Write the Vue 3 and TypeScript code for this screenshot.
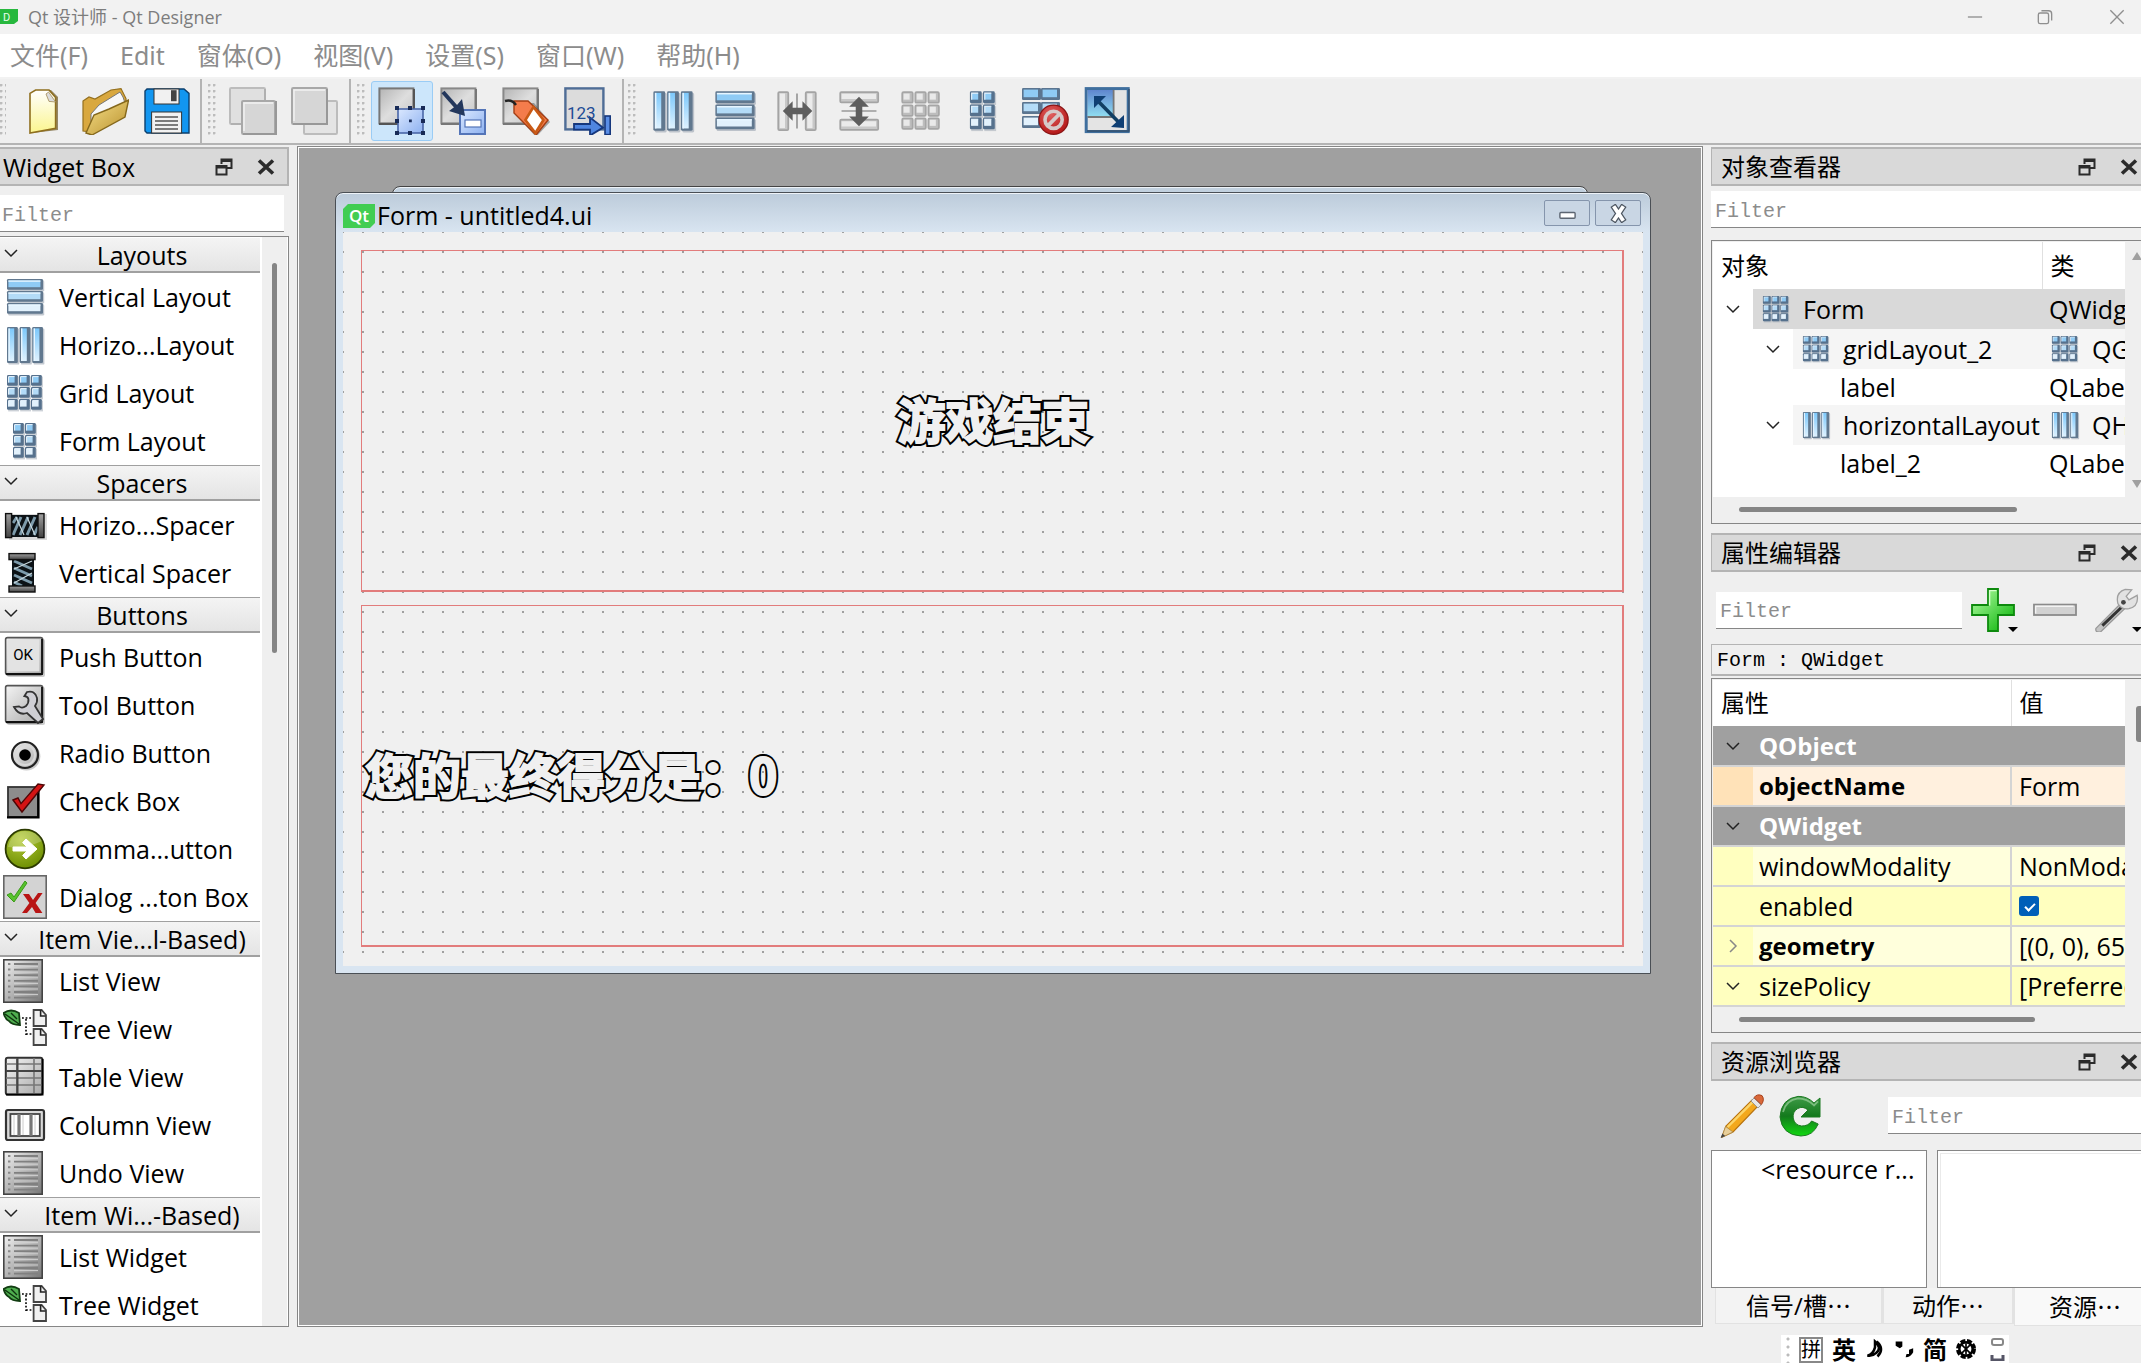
<script setup lang="ts">
import { ref } from 'vue'

interface Category {
  title: string
  items: { icon: string; label: string }[]
}

const menus = ['文件(F)', 'Edit', '窗体(O)', '视图(V)', '设置(S)', '窗口(W)', '帮助(H)']

const toolGroups = [
  [
    { icon: 'new', label: 'New' },
    { icon: 'open', label: 'Open' },
    { icon: 'save', label: 'Save' },
  ],
  [
    { icon: 'back', label: 'Send to Back' },
    { icon: 'front', label: 'Bring to Front' },
  ],
  [
    { icon: 'edit-widgets', label: 'Edit Widgets' },
    { icon: 'signals', label: 'Edit Signals/Slots' },
    { icon: 'buddies', label: 'Edit Buddies' },
    { icon: 'taborder', label: 'Edit Tab Order' },
  ],
  [
    { icon: 'hlayout', label: 'Lay Out Horizontally' },
    { icon: 'vlayout', label: 'Lay Out Vertically' },
    { icon: 'hsplit', label: 'Horizontal Splitter' },
    { icon: 'vsplit', label: 'Vertical Splitter' },
    { icon: 'grid-off', label: 'Lay Out in a Grid' },
    { icon: 'form', label: 'Lay Out in a Form Layout' },
    { icon: 'break', label: 'Break Layout' },
    { icon: 'adjust', label: 'Adjust Size' },
  ],
]
const activeTool = ref('edit-widgets')

const categories: Category[] = [
  {
    title: 'Layouts',
    items: [
      { icon: 'vlayout', label: 'Vertical Layout' },
      { icon: 'hlayout', label: 'Horizo...Layout' },
      { icon: 'grid', label: 'Grid Layout' },
      { icon: 'form', label: 'Form Layout' },
    ],
  },
  {
    title: 'Spacers',
    items: [
      { icon: 'hspacer', label: 'Horizo...Spacer' },
      { icon: 'vspacer', label: 'Vertical Spacer' },
    ],
  },
  {
    title: 'Buttons',
    items: [
      { icon: 'push', label: 'Push Button' },
      { icon: 'tool', label: 'Tool Button' },
      { icon: 'radio', label: 'Radio Button' },
      { icon: 'check', label: 'Check Box' },
      { icon: 'command', label: 'Comma...utton' },
      { icon: 'dialog', label: 'Dialog ...ton Box' },
    ],
  },
  {
    title: 'Item Vie...l-Based)',
    items: [
      { icon: 'list', label: 'List View' },
      { icon: 'tree', label: 'Tree View' },
      { icon: 'table', label: 'Table View' },
      { icon: 'column', label: 'Column View' },
      { icon: 'list', label: 'Undo View' },
    ],
  },
  {
    title: 'Item Wi...-Based)',
    items: [
      { icon: 'list', label: 'List Widget' },
      { icon: 'tree', label: 'Tree Widget' },
    ],
  },
]

const objects = [
  { name: 'Form', cls: 'QWidget', icon: 'grid', clsIcon: '', level: 0, kind: 'root' },
  { name: 'gridLayout_2', cls: 'QGridLayout', icon: 'grid', clsIcon: 'grid', level: 1, kind: 'layout' },
  { name: 'label', cls: 'QLabel', icon: '', clsIcon: '', level: 2, kind: 'leaf' },
  { name: 'horizontalLayout', cls: 'QHBoxLayout', icon: 'hlayout', clsIcon: 'hlayout', level: 1, kind: 'layout' },
  { name: 'label_2', cls: 'QLabel', icon: '', clsIcon: '', level: 2, kind: 'leaf' },
]

const properties = [
  { name: 'QObject', value: '', kind: 'group', bold: true, arrow: 'down' },
  { name: 'objectName', value: 'Form', kind: 'orange', bold: true, arrow: '' },
  { name: 'QWidget', value: '', kind: 'group', bold: true, arrow: 'down' },
  { name: 'windowModality', value: 'NonModal', kind: 'pale', bold: false, arrow: '' },
  { name: 'enabled', value: 'check', kind: 'yellow', bold: false, arrow: '' },
  { name: 'geometry', value: '[(0, 0), 65', kind: 'pale', bold: true, arrow: 'right' },
  { name: 'sizePolicy', value: '[Preferred', kind: 'yellow', bold: false, arrow: 'down' },
]

const widgetFilter = ref('')
const objectFilter = ref('')
const propertyFilter = ref('')
const resourceFilter = ref('')
const enabled = ref(true)

const gridCells = [2, 8, 14].flatMap((y, r) => [2, 8, 14].map((x) => ({ x, y, r })))
const formCells = [2, 8, 14].flatMap((y, r) => [5, 11].map((x) => ({ x, y, r })))
const blues = ['#8fcbf5', '#b3dbf7', '#e2f1fc']
</script>

<template>
  <div class="app">
    <svg class="defs" aria-hidden="true">
      <defs>
        <linearGradient id="gBlueV" x1="0" y1="0" x2="0" y2="1">
          <stop offset="0" stop-color="#7cc8fb" /><stop offset="1" stop-color="#dff2ff" />
        </linearGradient>
        <linearGradient id="gGrey" x1="0" y1="0" x2="1" y2="1">
          <stop offset="0" stop-color="#f4f4f4" /><stop offset="1" stop-color="#a8a8a8" />
        </linearGradient>
        <linearGradient id="gMid" x1="0" y1="0" x2="1" y2="1">
          <stop offset="0" stop-color="#b4b4b4" /><stop offset="0.5" stop-color="#dedede" /><stop offset="1" stop-color="#c2c2c2" />
        </linearGradient>
        <linearGradient id="gPaper" x1="0" y1="0" x2="0" y2="1">
          <stop offset="0" stop-color="#ffffff" /><stop offset="1" stop-color="#fbf58e" />
        </linearGradient>
        <linearGradient id="gFolder" x1="0" y1="0" x2="1" y2="1">
          <stop offset="0" stop-color="#f7e08a" /><stop offset="1" stop-color="#b8902c" />
        </linearGradient>
        <linearGradient id="gSel" x1="0" y1="0" x2="1" y2="1">
          <stop offset="0" stop-color="#dbe8ff" /><stop offset="1" stop-color="#8db1f0" />
        </linearGradient>
        <linearGradient id="gList" x1="0" y1="0" x2="1" y2="1">
          <stop offset="0" stop-color="#f2f2f2" /><stop offset="1" stop-color="#777777" />
        </linearGradient>
        <linearGradient id="gPlus" x1="0" y1="0" x2="1" y2="1">
          <stop offset="0" stop-color="#b8ffa8" /><stop offset="1" stop-color="#00b000" />
        </linearGradient>
        <linearGradient id="gReload" x1="0" y1="0" x2="0" y2="1">
          <stop offset="0" stop-color="#3f9a48" /><stop offset="0.5" stop-color="#137a1c" /><stop offset="1" stop-color="#12d812" />
        </linearGradient>
        <linearGradient id="gSteel" x1="0" y1="0" x2="0" y2="1">
          <stop offset="0" stop-color="#a0a0a0" /><stop offset="1" stop-color="#444444" />
        </linearGradient>
        <linearGradient id="gAdjust" x1="0" y1="0" x2="0" y2="1">
          <stop offset="0" stop-color="#5f86cf" /><stop offset="1" stop-color="#8fdcf0" />
        </linearGradient>
        <radialGradient id="gCmd" cx="0.4" cy="0.25" r="0.8">
          <stop offset="0" stop-color="#b6cc3a" /><stop offset="1" stop-color="#6a8c00" />
        </radialGradient>
        <radialGradient id="gStop" cx="0.4" cy="0.3" r="0.8">
          <stop offset="0" stop-color="#e06060" /><stop offset="1" stop-color="#b01010" />
        </radialGradient>
      </defs>

      <symbol id="i-vlayout" viewBox="0 0 22 22">
        <g v-for="(y, i) in [2, 8, 14]" :key="y">
          <rect x="2.6" :y="y + 0.8" width="18" height="5.4" rx="0.6" fill="#9aa3b0" opacity="0.6" />
          <rect x="2" :y="y" width="18" height="5.4" rx="0.6" fill="#61788f" />
          <rect x="2.7" :y="y + 0.7" width="16" height="3.4" :fill="blues[i]" />
          <rect x="2.7" :y="y + 0.7" width="16" height="0.7" fill="#e6f5ff" />
        </g>
      </symbol>
      <symbol id="i-hlayout" viewBox="0 0 22 22">
        <g v-for="x in [2, 8.3, 14.6]" :key="x">
          <rect :x="x + 0.7" y="2.8" width="5.4" height="18" rx="0.6" fill="#9aa3b0" opacity="0.6" />
          <rect :x="x" y="2" width="5.4" height="18" rx="0.6" fill="#61788f" />
          <rect :x="x + 0.7" y="2.7" width="2.9" height="16.3" fill="url(#gBlueV)" />
          <rect :x="x + 0.7" y="2.7" width="0.7" height="16.3" fill="#e6f5ff" />
        </g>
      </symbol>
      <symbol id="i-grid" viewBox="0 0 22 22">
        <g v-for="c in gridCells" :key="c.x + '-' + c.y">
          <rect :x="c.x + 0.6" :y="c.y + 0.8" width="5.4" height="5.4" fill="#9aa3b0" opacity="0.5" />
          <rect :x="c.x" :y="c.y" width="5.4" height="5.4" rx="0.6" fill="#56718d" />
          <rect :x="c.x + 0.8" :y="c.y + 0.8" width="3" height="3" :fill="blues[c.r]" />
          <path :d="`M${c.x + 0.8} ${c.y + 3.8}V${c.y + 0.8}H${c.x + 3.8}`" stroke="#eaf6ff" stroke-width="0.5" fill="none" />
        </g>
      </symbol>
      <symbol id="i-form" viewBox="0 0 22 22">
        <g v-for="c in formCells" :key="c.x + '-' + c.y">
          <rect :x="c.x + 0.6" :y="c.y + 0.8" width="5.4" height="5.4" fill="#9aa3b0" opacity="0.5" />
          <rect :x="c.x" :y="c.y" width="5.4" height="5.4" rx="0.6" fill="#56718d" />
          <rect :x="c.x + 0.8" :y="c.y + 0.8" width="3" height="3" :fill="blues[c.r]" />
          <path :d="`M${c.x + 0.8} ${c.y + 3.8}V${c.y + 0.8}H${c.x + 3.8}`" stroke="#eaf6ff" stroke-width="0.5" fill="none" />
        </g>
      </symbol>
      <symbol id="i-grid-off" viewBox="0 0 22 22">
        <g v-for="c in gridCells" :key="c.x + '-' + c.y">
          <rect :x="c.x + 0.4" :y="c.y + 0.4" width="4.8" height="4.8" rx="0.6" fill="#bdbdbd" stroke="#a6a6a6" stroke-width="0.8" />
          <rect :x="c.x + 1" :y="c.y + 1" width="2.8" height="2.8" fill="#e9e9e9" />
        </g>
      </symbol>
      <symbol id="i-hsplit" viewBox="0 0 22 22">
        <g v-for="x in [2.4, 15]" :key="x">
          <rect :x="x" y="2.4" width="4.6" height="17.4" rx="0.5" fill="#c8c8c8" stroke="#a4a4a4" stroke-width="0.8" />
          <rect :x="x + 0.7" y="3" width="2.4" height="15.8" fill="#ebebeb" />
        </g>
        <path d="M11 3v16" stroke="#9a9a9a" stroke-width="0.8" />
        <path d="M4.5 11L9 6.5v3h4.5v-3L18 11l-4.5 4.5v-3H9v3z" fill="#5e5e5e" />
      </symbol>
      <symbol id="i-vsplit" viewBox="0 0 22 22">
        <g v-for="y in [2.4, 15]" :key="y">
          <rect x="2.4" :y="y" width="17.4" height="4.6" rx="0.5" fill="#c8c8c8" stroke="#a4a4a4" stroke-width="0.8" />
          <rect x="3" :y="y + 0.7" width="15.8" height="2.4" fill="#ebebeb" />
        </g>
        <path d="M3 11h16" stroke="#9a9a9a" stroke-width="0.8" />
        <path d="M11 4.5L6.500 9h3v4.500h-3L11 18l4.500-4.500h-3V9h3z" fill="#5e5e5e" />
      </symbol>
      <symbol id="i-break" viewBox="0 0 24 24">
        <g v-for="(y, i) in [0.5, 7.5, 14.5]" :key="y">
          <g v-for="x in [0.5, 10]" :key="x">
            <rect :x="x" :y="y" width="9.5" height="6" rx="0.6" fill="#5b7590" />
            <rect :x="x + 0.8" :y="y + 0.8" width="7.2" height="3.8" :fill="blues[i]" />
          </g>
        </g>
        <rect x="10" y="14" width="12" height="8" fill="#efefef" />
        <circle cx="16.3" cy="16.4" r="7.6" fill="#8a1414" />
        <circle cx="16.3" cy="16.4" r="7" fill="url(#gStop)" />
        <circle cx="16.3" cy="16.4" r="4.3" fill="none" stroke="#d6c9c9" stroke-width="1.8" />
        <path d="M13.5 19.3L19.2 13.5" stroke="#d6c9c9" stroke-width="1.9" />
      </symbol>
      <symbol id="i-adjust" viewBox="0 0 24 24">
        <rect x="1.6" y="0.8" width="21" height="21.5" fill="#e4e4e4" stroke="#3f6f9e" stroke-width="1.5" />
        <rect x="2.3" y="1.5" width="13" height="13" fill="url(#gAdjust)" />
        <path d="M2.3 15h13V1.5" fill="none" stroke="#777" stroke-width="0.9" />
        <path d="M2 22h21V1" fill="none" stroke="#35506e" stroke-width="0.7" />
        <path d="M7 6.5L18 17.8" stroke="#123f63" stroke-width="1.8" />
        <path d="M5.5 4.500h6L5.500 10.500zM20.500 20.500v-6.500L14 20z" fill="#0f3f74" />
      </symbol>
      <symbol id="i-new" viewBox="0 0 24 24">
        <path d="M6.5 4l3-2.500H16l3.500 3.500v16.500L6.500 23z" fill="#6e5a2a" opacity="0.7" />
        <path d="M5.500 3.200l2.800-1.700h6.700l3.300 3.800v15.400L5.500 23z" fill="url(#gPaper)" stroke="#8f6f1e" stroke-width="0.8" />
        <path d="M13.500 3.500l1.500 3.700 3.300.3-3.500-5z" fill="#dcdcdc" stroke="#a28b55" stroke-width="0.4" />
      </symbol>
      <symbol id="i-open" viewBox="0 0 24 24">
        <path d="M1 7l3-2 3 1 8-4.500L20 .8l2.500 5V10L5 22.500 1 22z" fill="#d9a83f" stroke="#94701f" stroke-width="0.6" />
        <path d="M5 13.500L9 9l10.500-6.500L21 5l1 3-9 4-8 8z" fill="#f7f7f7" stroke="#777" stroke-width="0.5" />
        <path d="M2.500 23l4-9L14 11l9.800-4.500L22 15 5.500 24z" fill="url(#gFolder)" stroke="#85681c" stroke-width="0.7" />
      </symbol>
      <symbol id="i-save" viewBox="0 0 24 24">
        <path d="M2 1h18.500L23 3.200V23H2L1 22V2z" fill="#1296f0" stroke="#0a3f6e" stroke-width="0.7" />
        <rect x="5.5" y="1" width="12.5" height="7.5" fill="#f1f1f1" stroke="#333" stroke-width="0.5" />
        <rect x="14" y="1.6" width="2.8" height="5.5" fill="#444" />
        <rect x="4.3" y="12.5" width="15" height="10.5" fill="#f2f2f2" stroke="#333" stroke-width="0.5" />
        <path d="M6 15h11.5M6 17h11.5M6 19h11.5M6 21h11.5" stroke="#555" stroke-width="0.7" />
      </symbol>
      <symbol id="i-back" viewBox="0 0 24 24">
        <rect x="0.5" y="0.5" width="17.5" height="18" rx="0.6" fill="#e0e0e0" stroke="#bcbcbc" />
        <path d="M1 18.500h17V1" fill="none" stroke="#b0b0b0" />
        <rect x="6.5" y="7" width="16.5" height="16.5" rx="0.6" fill="#d6d6d6" stroke="#a8a8a8" />
        <path d="M7 23.500h16.500V7" fill="none" stroke="#989898" />
        <path d="M7.500 22V8H22" fill="none" stroke="#f2f2f2" stroke-width="0.7" />
      </symbol>
      <symbol id="i-front" viewBox="0 0 24 24">
        <rect x="6.5" y="7" width="16.5" height="16.5" rx="0.6" fill="#e4e4e4" stroke="#bcbcbc" />
        <rect x="0.5" y="0.5" width="17.5" height="18" rx="0.6" fill="#d6d6d6" stroke="#a8a8a8" />
        <path d="M1 18.500h17V1" fill="none" stroke="#989898" />
        <path d="M1.500 17V1.500H17" fill="none" stroke="#f2f2f2" stroke-width="0.7" />
      </symbol>
      <symbol id="i-edit-widgets" viewBox="0 0 24 24">
        <rect x="0.7" y="0.7" width="17" height="17.5" fill="url(#gMid)" stroke="#777" />
        <path d="M0.500 18.500h17.500V1" fill="none" stroke="#555" />
        <rect x="10" y="11" width="12.5" height="12" fill="url(#gSel)" stroke="#4a67a8" stroke-width="0.8" />
        <path d="M8.500 9.500h2v2h-2zM15 9.500h2v2h-2zM21.500 9.500h2v2h-2zM8.500 16h2v2h-2zM21.500 16h2v2h-2zM8.500 22h2v2h-2zM15 22h2v2h-2zM21.500 22h2v2h-2zM15.500 16.200h1.400v1.400h-1.400z" fill="#182b57" />
      </symbol>
      <symbol id="i-signals" viewBox="0 0 24 24">
        <rect x="0.7" y="0.7" width="17" height="17.5" fill="url(#gMid)" stroke="#888" />
        <path d="M0.500 18.500h17.500V1" fill="none" stroke="#777" />
        <rect x="10" y="11.5" width="12.5" height="12" fill="url(#gSel)" stroke="#5475b8" />
        <rect x="12.5" y="16.5" width="8" height="3.5" fill="#fff" stroke="#5475b8" stroke-width="0.6" />
        <path d="M1.500 2.500L9 11" stroke="#23375c" stroke-width="2" />
        <path d="M12.500 14.500l-1.500-8.500L8.500 9 4.500 12z" fill="#23375c" />
      </symbol>
      <symbol id="i-buddies" viewBox="0 0 24 24">
        <rect x="0.7" y="0.7" width="17" height="17.5" fill="url(#gMid)" stroke="#888" />
        <path d="M0.500 18.500h17.500V1" fill="none" stroke="#777" />
        <path d="M8 8l8 0 8 9.500L17 25 8 15z" fill="#555" opacity="0.5" />
        <path d="M6 7h7l10 9.500-6 7.500L6 13z" fill="#f47c4c" stroke="#a33e14" stroke-width="0.7" />
        <path d="M15.700 10l5 6.500-4 6.500-5-6.500z" fill="#fff" stroke="#c95a16" stroke-width="1.3" />
        <path d="M1.500 7Q5 6 7 9" fill="none" stroke="#222" stroke-width="1.2" />
      </symbol>
      <symbol id="i-taborder" viewBox="0 0 24 24">
        <rect x="0.7" y="0.7" width="19" height="20.5" fill="#dcdcdc" stroke="#4f6d96" stroke-width="1.2" />
        <path d="M5 18.500h8v-3.200l6.500 5-6.500 4v-3H5z" fill="#4f86e0" stroke="#16377c" stroke-width="0.9" />
        <rect x="20.5" y="14.5" width="2.6" height="9.3" fill="#5a8ee6" stroke="#16377c" stroke-width="0.8" />
      </symbol>

      <symbol id="i-hspacer" viewBox="0 0 22 22">
        <rect x="3" y="5.5" width="19" height="13" fill="#888" opacity="0.3" />
        <rect x="4" y="6" width="14" height="11" fill="#0c1216" />
        <path d="M5 16l4-9M8.500 16l4-9M12 16l4-9M5 10l2-3M15.500 16l2-4" stroke="#7d9bab" stroke-width="1.5" />
        <path d="M6.500 7l4 9M12 7l4 9" stroke="#c8d8de" stroke-width="0.6" />
        <rect x="1.3" y="5.3" width="3" height="12" fill="url(#gSteel)" stroke="#111" stroke-width="0.7" />
        <rect x="17.5" y="5.3" width="3" height="12" fill="url(#gSteel)" stroke="#111" stroke-width="0.7" />
      </symbol>
      <symbol id="i-vspacer" viewBox="0 0 22 22">
        <rect x="4.5" y="4" width="11" height="14" fill="#0c1216" />
        <path d="M5.500 5l9 4M5.500 8.500l9 4M5.500 12l9 4M5.500 15.500l4 2" stroke="#7d9bab" stroke-width="1.5" />
        <path d="M14.500 5l-9 4M14.500 11l-9 5" stroke="#c8d8de" stroke-width="0.6" />
        <rect x="3" y="1.3" width="13" height="3" fill="url(#gSteel)" stroke="#111" stroke-width="0.7" />
        <rect x="3" y="17.5" width="13" height="3" fill="url(#gSteel)" stroke="#111" stroke-width="0.7" />
      </symbol>
      <symbol id="i-push" viewBox="0 0 22 22">
        <rect x="2" y="2" width="19" height="19" rx="1" fill="#999" opacity="0.5" />
        <rect x="1.3" y="1.3" width="18.5" height="18.5" rx="1" fill="url(#gGrey)" stroke="#555" stroke-width="0.8" />
        <rect x="2.2" y="2.2" width="16" height="16" fill="#e3e3e3" />
        <path d="M1.500 19.500h18V2" fill="none" stroke="#111" stroke-width="0.9" />
      </symbol>
      <symbol id="i-tool" viewBox="0 0 22 22">
        <rect x="2" y="2" width="19" height="19" rx="1" fill="#999" opacity="0.5" />
        <rect x="1.3" y="1.3" width="18.5" height="18.5" rx="1" fill="url(#gGrey)" stroke="#555" stroke-width="0.8" />
        <path d="M1.500 19.500h18V2" fill="none" stroke="#111" stroke-width="0.9" />
        <path d="M12 4.500q4-1 5 3 .4 2-1 4l4 6.500-2.500 2-5.500-5q-4 1.500-6.500-3l2.500-.3q1.500 1.300 3.500-.2 1.500-1.500 1.200-3.500-.3-1.200-2-1.500z" fill="#cfcfd4" stroke="#333" stroke-width="0.9" />
      </symbol>
      <symbol id="i-radio" viewBox="0 0 22 22">
        <circle cx="11.7" cy="12.800" r="7" fill="#aaa" opacity="0.6" />
        <circle cx="11" cy="12" r="6.5" fill="url(#gGrey)" stroke="#222" stroke-width="1.1" />
        <circle cx="11" cy="12" r="5" fill="none" stroke="#d9d9d9" stroke-width="0.9" />
        <circle cx="11" cy="12" r="2.9" fill="#000" />
      </symbol>
      <symbol id="i-check" viewBox="0 0 22 22">
        <rect x="2.5" y="4" width="15" height="15" fill="#8d8d8d" stroke="#333" stroke-width="0.9" />
        <path d="M2 19.200h15.700V4" fill="none" stroke="#000" stroke-width="1.2" />
        <path d="M5 10.500l2.500-1 1.500 2.800 8.500-9.800 3 .5L9.500 16.500z" fill="#d41414" stroke="#4e0606" stroke-width="0.7" />
      </symbol>
      <symbol id="i-command" viewBox="0 0 22 22">
        <circle cx="11" cy="11" r="9.7" fill="url(#gCmd)" stroke="#2c3a00" stroke-width="0.9" />
        <path d="M2.500 10Q11 11 19.500 7 17 2 11 2 4.500 2 2.500 10z" fill="#fff" opacity="0.22" />
        <path d="M5 10h7L9.800 7.800 11.500 6l5.500 5-5.500 5-1.700-1.800L12 12H5z" fill="#fff" stroke="#fff" stroke-width="0.5" />
      </symbol>
      <symbol id="i-dialog" viewBox="0 0 22 22">
        <rect x="0.4" y="0.4" width="21.2" height="21.2" fill="#d3d3d3" stroke="#666" stroke-width="0.8" />
        <path d="M2 10l2-1 1.500 2L11 3l1 1-6.500 9.500z" fill="#58c22e" stroke="#3a9a18" stroke-width="0.5" />
        <path d="M10 9.500h3l2 3 2.500-3.500h2.300L16.300 14l3.400 5h-3.400L14.500 16l-2.500 3H9.500l3.700-5z" fill="#b81414" />
      </symbol>
      <symbol id="i-list" viewBox="0 0 22 22">
        <rect x="0.4" y="0.4" width="19.2" height="21.2" fill="url(#gList)" stroke="#444" stroke-width="0.8" />
        <path d="M2.500 2.500h1.200M2.500 5.300h1.200M2.500 8.100h1.200M2.500 10.900h1.200M2.500 13.700h1.200M2.500 16.500h1.200M2.500 19.300h1.200" stroke="#888" stroke-width="1" />
        <path d="M5.500 2.500h12M5.500 5.300h12M5.500 8.100h12M5.500 10.900h12M5.500 13.700h12M5.500 16.500h12M5.500 19.300h12" stroke="#808080" stroke-width="0.9" />
        <path d="M5.500 3.800h12M5.500 6.600h12M5.500 9.400h12M5.500 12.200h12M5.500 15h12M5.500 17.800h12" stroke="#d0d0d0" stroke-width="0.5" />
      </symbol>
      <symbol id="i-tree" viewBox="0 0 22 22">
        <path d="M0.300 3Q4 .5 8 3l.5 6Q4.500 9 3 7 1 6 .3 3z" fill="#4fae4f" stroke="#123d12" stroke-width="0.9" />
        <path d="M1 3.500L8 8.500M4 3l3 3" stroke="#0e330e" stroke-width="0.7" />
        <path d="M9.500 5.500h5M11.500 6v8M11.500 13.500h3" stroke="#000" stroke-width="0.8" stroke-dasharray="0.9 0.9" fill="none" />
        <path d="M15.300 1.500h4l2.200 2.500v5.500h-6.200zM15.300 11h4l2.200 2.500V19h-6.200z" fill="#f0f0f0" stroke="#444" stroke-width="0.9" />
        <path d="M18.800 1.500v3h2.500M18.800 11v3h2.500" fill="none" stroke="#222" stroke-width="0.8" />
      </symbol>
      <symbol id="i-table" viewBox="0 0 22 22">
        <rect x="1.4" y="1.4" width="18.3" height="18.3" rx="1" fill="url(#gGrey)" stroke="#333" stroke-width="1" />
        <path d="M1.500 4.500h18M1.500 8h18M1.500 11.500h18M1.500 15h18M7 1.500v18M15.500 1.500v18" stroke="#777" stroke-width="0.8" />
        <path d="M7.200 1.500v18M1.500 8h18" stroke="#444" stroke-width="1.1" />
        <path d="M1.500 19.800h18.300V2" fill="none" stroke="#000" stroke-width="0.9" />
      </symbol>
      <symbol id="i-column" viewBox="0 0 22 22">
        <rect x="1.5" y="3.5" width="19" height="15" rx="1" fill="#d9d9d9" stroke="#333" stroke-width="1.1" />
        <rect x="3.7" y="5.5" width="14.7" height="11" fill="#fff" stroke="#444" stroke-width="0.9" />
        <path d="M8 5.500v11M14 5.500v11" stroke="#777" stroke-width="1.6" />
        <path d="M5.500 16V6M10 16V6M16 16V6" stroke="#ccc" stroke-width="0.5" />
      </symbol>

      <symbol id="i-float" viewBox="0 0 18 18">
        <path d="M6.500 6V1.500h10v8.500H12" fill="none" stroke="#2b2b2b" stroke-width="2" />
        <path d="M6 2.500h11" stroke="#2b2b2b" stroke-width="3" />
        <rect x="1.5" y="8" width="10" height="8.5" fill="none" stroke="#2b2b2b" stroke-width="2" />
        <path d="M1 9h11" stroke="#2b2b2b" stroke-width="3" />
      </symbol>
      <symbol id="i-close" viewBox="0 0 18 18">
        <path d="M2 2.500L16 15.500M16 2.500L2 15.500" stroke="#2b2b2b" stroke-width="3.6" />
      </symbol>
      <symbol id="i-down" viewBox="0 0 14 14">
        <path d="M1 4l6 6 6-6" fill="none" stroke="#222" stroke-width="1.5" />
      </symbol>
      <symbol id="i-right" viewBox="0 0 14 14">
        <path d="M4 1l6 6-6 6" fill="none" stroke="#888" stroke-width="1.5" />
      </symbol>
      <symbol id="i-plus" viewBox="0 0 22 22">
        <path d="M8.500.5h5v8h8v5h-8v8h-5v-8h-8v-5h8z" fill="url(#gPlus)" stroke="#0d8a0d" stroke-width="0.9" />
        <path d="M9.300 8.800V1.300h3.400" fill="none" stroke="#d6ffcc" stroke-width="0.7" />
      </symbol>
      <symbol id="i-minus" viewBox="0 0 22 22">
        <rect x="0.5" y="8.3" width="21" height="5.2" fill="#d2d2d2" stroke="#8b8b8b" stroke-width="0.9" />
        <path d="M1.300 12.700V9.100h19" fill="none" stroke="#f4f4f4" stroke-width="0.7" />
      </symbol>
      <symbol id="i-wrench" viewBox="0 0 24 24">
        <path d="M.5 22L13.500 9l2.500 2.500L3 24q-3 .5-2.500-2z" fill="#c4c4c4" stroke="#999" stroke-width="0.7" />
        <path d="M4 20.500L14.500 10.500" stroke="#333" stroke-width="1.6" />
        <path d="M12.500 8.500Q11 2.500 16.500 .8L20 1l-3 3.500 1.500 2L23 4Q24 10 18.500 11.300q-4 .7-6-2.800z" fill="#e2e2e2" stroke="#a0a0a0" stroke-width="0.7" />
        <circle cx="15.5" cy="7.800" r="1.3" fill="#444" />
      </symbol>
      <symbol id="i-pencil" viewBox="0 0 22 22">
        <path d="M1 21.500l2-5.500L16 3l3 3L6.500 19z" fill="#f3a81d" stroke="#b87410" stroke-width="0.6" />
        <path d="M3.800 16.500L16.500 3.800" stroke="#fbd56b" stroke-width="1.2" />
        <path d="M.8 21.800l2-5.600 3.700 2.800z" fill="#e8cf9a" stroke="#a98745" stroke-width="0.4" />
        <path d="M.3 22l.9-2.300 1.400 1.300z" fill="#444" />
        <path d="M15.500 3.500l1.500-1.500L20.500 5.500 19 7z" fill="#e6e6e6" stroke="#888" stroke-width="0.4" />
        <path d="M17 1.800Q18.500-.3 21 .8q1.500 2-.3 4.500z" fill="#d9683a" stroke="#a8431c" stroke-width="0.5" />
      </symbol>
      <symbol id="i-reload" viewBox="0 0 22 22">
        <path d="M21 2v9.500h-9.500l3.500-3.500Q12.500 5.800 9.800 7.300 7.200 9 7.600 12q.6 3.600 4.200 4 3.500 0 5-2.500l3.300 1.500q-2.500 6-8.700 6Q2 20.500 1 11.500 1.500 2.300 10 1.200q4.500-.2 8 3.300z" fill="url(#gReload)" stroke="#1d7a22" stroke-width="0.5" />
        <path d="M2.500 9Q4 3 10 2.200q4.500 0 8 3.500l2-2" fill="none" stroke="#9ad09a" stroke-width="0.9" opacity="0.7" />
      </symbol>
    </svg>

    <header class="titlebar">
      <svg class="app-logo" viewBox="0 0 18 16" aria-hidden="true">
        <path d="M0 0h18v12l-4 3H0z" fill="#27b83e" />
        <text x="3" y="12" font-family="Roboto, sans-serif" font-size="11" fill="#e8ffe8">D</text>
      </svg>
      <span class="app-title">Qt 设计师 - Qt Designer</span>
      <button class="win-btn" aria-label="Minimize">
        <svg viewBox="0 0 18 18"><path d="M1 9h16" stroke="#8f8f8f" stroke-width="1.500" /></svg>
      </button>
      <button class="win-btn" aria-label="Restore">
        <svg viewBox="0 0 18 18" fill="none" stroke="#8f8f8f" stroke-width="1.500">
          <rect x="1.5" y="4.5" width="11.5" height="12" rx="2" />
          <path d="M5 2h8q3.500 0 3.500 3.500V13" />
        </svg>
      </button>
      <button class="win-btn" aria-label="Close">
        <svg viewBox="0 0 18 18"><path d="M1.500 1.500l15 15M16.500 1.500l-15 15" stroke="#8f8f8f" stroke-width="1.500" /></svg>
      </button>
    </header>

    <nav class="menubar">
      <button v-for="m in menus" :key="m">{{ m }}</button>
    </nav>

    <div class="toolbar">
      <div v-for="(group, gi) in toolGroups" :key="gi" class="tool-group">
        <span class="handle"></span>
        <button
          v-for="t in group"
          :key="t.icon"
          class="tool"
          :class="{ active: t.icon === activeTool }"
          :aria-label="t.label"
          @click="activeTool = t.icon"
        >
          <svg viewBox="0 0 48 48" aria-hidden="true">
            <use :href="'#i-' + t.icon" />
            <text v-if="t.icon === 'taborder'" x="3" y="32" class="tab-digits">123</text>
          </svg>
        </button>
      </div>
    </div>

    <main class="body">
      <aside class="left">
        <div class="dock-title">
          <h2>Widget Box</h2>
          <button aria-label="Float"><svg><use href="#i-float" /></svg></button>
          <button aria-label="Close"><svg><use href="#i-close" /></svg></button>
        </div>
        <input v-model="widgetFilter" class="filter widget-filter" placeholder="Filter" aria-label="Widget filter" />
        <div class="widget-box">
          <div class="widget-list">
            <section v-for="c in categories" :key="c.title">
              <button class="cat">
                <svg aria-hidden="true"><use href="#i-down" /></svg>
                <span>{{ c.title }}</span>
              </button>
              <ul>
                <li v-for="w in c.items" :key="w.label">
                  <svg viewBox="0 0 44 44" aria-hidden="true">
                    <use :href="'#i-' + w.icon" />
                    <text v-if="w.icon === 'push'" x="20" y="25" class="push-text">OK</text>
                  </svg>
                  <span>{{ w.label }}</span>
                </li>
              </ul>
            </section>
          </div>
          <div class="widget-scroll"><i></i></div>
        </div>
      </aside>

      <section class="mdi">
        <div class="behind"></div>
        <div class="form-window">
          <div class="form-title">
            <svg viewBox="0 0 32 24" class="qt-logo" aria-hidden="true">
              <path d="M5 0h27v19l-5 5H0V5z" fill="#41cd52" />
              <text x="16" y="18" text-anchor="middle" font-family="Open Sans, sans-serif" font-size="17" font-weight="600" fill="#fff">Qt</text>
            </svg>
            <span>Form - untitled4.ui</span>
            <button aria-label="Minimize form">
              <svg viewBox="0 0 20 20"><rect x="2" y="9" width="16" height="6" rx="1" fill="#fff" stroke="#5d6672" stroke-width="1.500" /></svg>
            </button>
            <button aria-label="Close form">
              <svg viewBox="0 0 20 20">
                <path d="M6 4l8 12M14 4L6 16" stroke="#4c5560" stroke-width="6.500" stroke-linecap="square" />
                <path d="M6 4l8 12M14 4L6 16" stroke="#fff" stroke-width="4" stroke-linecap="square" />
              </svg>
            </button>
          </div>
          <div class="canvas">
            <div class="layout-box center"><span class="outlined" data-text="游戏结束">游戏结束</span></div>
            <div class="layout-box"><span class="outlined" data-text="您的最终得分是：0">您的最终得分是：0</span></div>
          </div>
        </div>
      </section>

      <aside class="right">
        <section class="dock objects">
          <div class="dock-title">
            <h2>对象查看器</h2>
            <button aria-label="Float"><svg><use href="#i-float" /></svg></button>
            <button aria-label="Close"><svg><use href="#i-close" /></svg></button>
          </div>
          <input v-model="objectFilter" class="filter object-filter" placeholder="Filter" aria-label="Object filter" />
          <div class="view object-view">
            <div class="view-body">
              <table>
                <colgroup><col class="c-obj" /><col /></colgroup>
                <thead>
                  <tr><th>对象</th><th>类</th></tr>
                </thead>
                <tbody>
                  <tr v-for="o in objects" :key="o.name" :class="o.kind">
                    <td>
                      <div class="node" :class="'l' + o.level">
                        <span class="twist"><svg v-if="o.icon" aria-hidden="true"><use href="#i-down" /></svg></span>
                        <span class="node-body">
                          <svg v-if="o.icon" aria-hidden="true"><use :href="'#i-' + o.icon" /></svg>
                          <span>{{ o.name }}</span>
                        </span>
                      </div>
                    </td>
                    <td>
                      <div class="cls">
                        <svg v-if="o.clsIcon" aria-hidden="true"><use :href="'#i-' + o.clsIcon" /></svg>
                        <span>{{ o.cls }}</span>
                      </div>
                    </td>
                  </tr>
                </tbody>
              </table>
              <div class="vbar arrows"><b class="up"></b><b class="dn"></b></div>
            </div>
            <div class="hbar"><i class="thumb-a"></i></div>
          </div>
        </section>

        <section class="dock props">
          <div class="dock-title">
            <h2>属性编辑器</h2>
            <button aria-label="Float"><svg><use href="#i-float" /></svg></button>
            <button aria-label="Close"><svg><use href="#i-close" /></svg></button>
          </div>
          <div class="prop-tools">
            <input v-model="propertyFilter" class="filter" placeholder="Filter" aria-label="Property filter" />
            <button class="drop" aria-label="Add property"><svg><use href="#i-plus" /></svg></button>
            <button aria-label="Remove property"><svg><use href="#i-minus" /></svg></button>
            <button class="drop" aria-label="Configure"><svg><use href="#i-wrench" /></svg></button>
          </div>
          <p class="object-line">Form : QWidget</p>
          <div class="view prop-view">
            <div class="view-body">
              <table>
                <colgroup><col class="c-arrow" /><col class="c-name" /><col /></colgroup>
                <thead>
                  <tr><th colspan="2">属性</th><th>值</th></tr>
                </thead>
                <tbody>
                  <tr v-for="p in properties" :key="p.name" :class="p.kind">
                    <td class="arrow"><svg v-if="p.arrow" aria-hidden="true"><use :href="'#i-' + p.arrow" /></svg></td>
                    <td class="name" :class="{ bold: p.bold }">{{ p.name }}</td>
                    <td class="value">
                      <input v-if="p.value === 'check'" v-model="enabled" type="checkbox" aria-label="enabled" />
                      <template v-else>{{ p.value }}</template>
                    </td>
                  </tr>
                </tbody>
              </table>
              <div class="vbar"><i></i></div>
            </div>
            <div class="hbar"><i class="thumb-b"></i></div>
          </div>
        </section>

        <section class="dock resources">
          <div class="dock-title">
            <h2>资源浏览器</h2>
            <button aria-label="Float"><svg><use href="#i-float" /></svg></button>
            <button aria-label="Close"><svg><use href="#i-close" /></svg></button>
          </div>
          <div class="res-tools">
            <button aria-label="Edit resources"><svg><use href="#i-pencil" /></svg></button>
            <button aria-label="Reload"><svg><use href="#i-reload" /></svg></button>
            <input v-model="resourceFilter" class="filter" placeholder="Filter" aria-label="Resource filter" />
          </div>
          <div class="res-panes">
            <div class="res-tree">&lt;resource r...</div>
            <div class="res-view"></div>
          </div>
          <div class="tabs" role="tablist">
            <button role="tab">信号/槽⋯</button>
            <button role="tab">动作⋯</button>
            <button role="tab" class="current" aria-selected="true">资源⋯</button>
          </div>
        </section>
      </aside>
    </main>

    <footer class="status">
      <div class="ime">
        <span class="grip"></span>
        <span class="boxed">拼</span>
        <span>英</span>
        <svg viewBox="0 0 24 24"><path d="M12 3q9 8 1 14-4 4-10 3 7-2 9-10z" fill="#fff" stroke="#000" stroke-width="3" /><path d="M14 3q10 9 1 18" fill="none" stroke="#000" stroke-width="3" /></svg>
        <svg viewBox="0 0 24 24"><path d="M2 3h8v6l-3 2-5-3zM23 11v5q-3 6-9 6l1-4h3v-5z" fill="#000" /></svg>
        <span>简</span>
        <svg viewBox="0 0 24 24">
          <circle cx="12" cy="12" r="10" fill="none" stroke="#000" stroke-width="4" stroke-dasharray="6 2" />
          <circle cx="12" cy="12" r="8" fill="none" stroke="#000" stroke-width="3" />
          <path d="M7 7l10 10M17 7L7 17M12 5v14" stroke="#000" stroke-width="2" />
        </svg>
        <svg class="last" viewBox="0 0 20 24"><rect x="7" y="2" width="11" height="6" rx="2" fill="none" stroke="#888" stroke-width="2" /><path d="M7 18v5h11v-5" fill="none" stroke="#556" stroke-width="3" /></svg>
      </div>
    </footer>
  </div>
</template>

<style>
body {
  margin: 0;
  overflow: hidden;
}
</style>

<style scoped>
.app {
  height: 100vh;
  display: flex;
  flex-direction: column;
  overflow: hidden;
  background: #efefef;
  color: #000;
  font-family: 'Open Sans', 'Noto Sans CJK SC', sans-serif;
  font-size: 25px;
  line-height: 32px;
}
.app * {
  box-sizing: border-box;
}
.defs {
  position: absolute;
  width: 0;
  height: 0;
}
button {
  border: 0;
  padding: 0;
  margin: 0;
  background: none;
  color: inherit;
  font: inherit;
  cursor: pointer;
}
svg {
  display: block;
  flex: none;
}
.tab-digits {
  font-family: Roboto, sans-serif;
  font-size: 17px;
  fill: #1e4c96;
}
.push-text {
  font-family: Roboto, sans-serif;
  font-size: 15px;
  text-anchor: middle;
}

/* title bar */
.titlebar {
  flex: none;
  display: flex;
  align-items: center;
  height: 34px;
  background: #f2f2f2;
  color: #7d7d7d;
  font-size: 18px;
}
.app-logo {
  width: 18px;
  height: 16px;
}
.app-title {
  flex: 1;
  padding-left: 10px;
}
.win-btn {
  width: 70px;
  display: flex;
  justify-content: center;
}
.win-btn:last-child {
  width: 49px;
  margin-left: 12px;
}
.win-btn svg {
  width: 16px;
  height: 16px;
}

/* menu bar */
.menubar {
  flex: none;
  display: flex;
  gap: 32px;
  height: 45px;
  padding-left: 10px;
  padding-bottom: 2px;
  background: #fff;
  border-bottom: 2px solid #f2f2f2;
  color: #8c8c8c;
  font-family: 'Noto Sans', 'Noto Sans CJK SC', sans-serif;
}

/* tool bar */
.toolbar {
  flex: none;
  display: flex;
  height: 66px;
  border-bottom: 2px solid #b4b4b4;
}
.tool-group {
  display: flex;
  align-items: center;
  padding: 0 3px 0 6px;
  border-right: 2px solid #b4b4b4;
}
.tool-group:first-child {
  padding: 0 2px 0 0;
}
.tool-group:last-child {
  padding-left: 4px;
  border-right: 0;
}
.handle {
  width: 8px;
  height: 54px;
  margin-right: 6px;
  background: radial-gradient(circle at 1px 1px, #bcbcbc 1px, transparent 2px) 0 0 / 5px 6px;
}
.tool-group:first-child .handle {
  width: 6px;
}
.tool {
  width: 62px;
  height: 60px;
  display: flex;
  align-items: center;
  justify-content: center;
  border: 1px solid transparent;
  border-radius: 3px;
}
.tool.active {
  background: #cce6fb;
  border-color: #9accf5;
}
.tool svg {
  width: 48px;
  height: 48px;
}

/* docks */
.body {
  flex: 1;
  min-height: 0;
  display: flex;
  gap: 8px;
  padding-top: 1px;
}
.dock-title {
  flex: none;
  display: flex;
  align-items: center;
  height: 39px;
  margin-top: 1px;
  background: #d9d9d9;
  border: 2px solid #b4b4b4;
  border-left-width: 1px;
}
.dock-title h2 {
  flex: 1;
  margin: 0;
  font-size: 24px;
  font-weight: 400;
}
.dock-title button {
  width: 42px;
  display: flex;
  justify-content: center;
}
.dock-title svg {
  width: 18px;
  height: 18px;
}
.filter {
  height: 37px;
  width: 100%;
  border: 0;
  border-bottom: 1px solid #868686;
  border-radius: 0;
  padding: 4px 4px 0;
  background: #fff;
  font-family: 'Liberation Mono', monospace;
  font-size: 20px;
  outline: 0;
}
.filter::placeholder {
  color: #8c8c8c;
  opacity: 1;
}

.left {
  flex: none;
  width: 289px;
  display: flex;
  flex-direction: column;
}
.left .dock-title {
  border-left: 0;
  padding-left: 3px;
}
.left h2 {
  font-size: 25px;
}
.widget-filter {
  width: 284px;
  margin: 9px 0 4px;
  padding-left: 2px;
}
.widget-box {
  flex: 1;
  min-height: 0;
  display: flex;
  border: 1px solid #868686;
  border-left: 0;
  background: #fff;
  overflow: hidden;
}
.widget-list {
  flex: 1;
  overflow: hidden;
}
.widget-scroll {
  width: 26px;
  padding: 26px 0 0 10px;
  border-right: 1px solid #fff;
  background: #efefef;
}
.widget-scroll i {
  display: block;
  width: 5px;
  height: 390px;
  border-radius: 3px;
  background: #858585;
}
.cat {
  display: flex;
  align-items: center;
  width: 260px;
  height: 36px;
  border-top: 1px solid #a0a0a0;
  border-bottom: 2px solid #a0a0a0;
  background: linear-gradient(#f4f4f4, #e4e4e4);
}
.cat svg {
  width: 14px;
  height: 14px;
  margin: 0 0 4px 4px;
}
.cat span {
  flex: 1;
  padding-left: 6px;
  text-align: center;
}
.widget-list section:first-child .cat {
  border-top-color: #fff;
}
ul {
  list-style: none;
  margin: 0;
  padding: 0;
}
li {
  display: flex;
  align-items: center;
  gap: 12px;
  height: 48px;
  padding: 0 0 1px 3px;
}
li svg {
  width: 44px;
  height: 44px;
}

/* form area */
.mdi {
  flex: 1;
  position: relative;
  border: 1px solid #868686;
  outline: 1px solid #fff;
  outline-offset: -2px;
  background: #a0a0a0;
  overflow: hidden;
}
.behind {
  position: absolute;
  left: 94px;
  top: 39px;
  width: 1196px;
  height: 60px;
  border: 1px solid #444;
  border-radius: 8px 8px 0 0;
  background: #c2d1df;
  box-shadow: inset 0 1px #eef3f8;
}
.form-window {
  position: absolute;
  left: 37px;
  top: 45px;
  width: 1316px;
  height: 782px;
  display: flex;
  flex-direction: column;
  padding: 0 7px 7px;
  border: 1px solid #4a4f55;
  border-radius: 8px 8px 0 0;
  background: linear-gradient(#bccbda, #d9e5f1 40px);
  box-shadow: inset 0 1px #eef3f8;
}
.form-title {
  flex: none;
  display: flex;
  align-items: center;
  height: 39px;
}
.form-title span {
  flex: 1;
  padding: 5px 0 0 2px;
}
.qt-logo {
  width: 32px;
  height: 24px;
  margin-top: 7px;
}
.form-title button {
  width: 46px;
  height: 26px;
  margin: 0 2px 6px 3px;
  display: flex;
  align-items: center;
  justify-content: center;
  border: 1px solid #8595ac;
  border-radius: 2px;
  background: #c9d6e4;
  align-self: flex-end;
}
.form-title button svg {
  width: 19px;
  height: 19px;
}
.canvas {
  flex: 1;
  display: flex;
  flex-direction: column;
  gap: 13px;
  padding: 18px 19px 19px 18px;
  background:
    linear-gradient(90deg, transparent 2px, #f0f0f0 2px) -1px -1px / 20px 20px,
    linear-gradient(#a0a0a0 2px, #f0f0f0 2px) -1px -1px / 20px 20px;
}
.layout-box {
  flex: 1;
  display: flex;
  align-items: center;
  padding: 0 0 6px 3px;
  border: 1px solid #e27c7c;
  border-right-width: 2px;
  border-bottom-width: 2px;
}
.center {
  justify-content: center;
}
.outlined {
  position: relative;
  font-family: 'Noto Sans CJK SC', sans-serif;
  font-size: 48px;
  line-height: 64px;
  font-weight: 700;
  color: #000;
  -webkit-text-stroke: 6px #000;
  paint-order: stroke fill;
}
/* second, thinner pass that hollows the heavy lettering */
.outlined::after {
  content: attr(data-text);
  position: absolute;
  inset: 0;
  color: #f0f0f0;
  -webkit-text-stroke: 2px #f0f0f0;
}

/* right docks */
.right {
  flex: none;
  width: 430px;
  display: flex;
  flex-direction: column;
  overflow: hidden;
}
.right .dock-title {
  border-right: 0;
  padding-left: 9px;
}
.right .dock-title button:last-child {
  margin-right: -9px;
}
.object-filter {
  margin-top: 5px;
}
.view {
  border: 1px solid #868686;
  border-right: 0;
  background: #efefef;
}
.view-body {
  display: flex;
  margin: 1px 0 0 1px;
  background: #fff;
}
table {
  flex: 1;
  width: 0;
  table-layout: fixed;
  border-collapse: collapse;
}
th {
  height: 47px;
  padding: 0 0 0 8px;
  text-align: left;
  font-size: 24px;
  font-weight: 400;
  overflow: hidden;
}
th + th {
  border-left: 1px solid #e0e0e0;
}
td {
  padding: 0;
  overflow: hidden;
  white-space: nowrap;
}
.object-view {
  margin-top: 12px;
  height: 284px;
}
.object-view .view-body {
  height: 255px;
  align-items: flex-start;
}
.c-obj {
  width: 329px;
}
.node,
.cls,
.node-body,
.twist {
  display: flex;
  align-items: center;
}
.node,
.cls {
  height: 40px;
}
.leaf .node,
.leaf .cls {
  height: 36px;
}
.l1 {
  padding-left: 40px;
}
.l2 {
  padding-left: 80px;
}
.twist {
  width: 40px;
  justify-content: center;
}
.twist svg {
  width: 14px;
  height: 14px;
}
.node-body {
  flex: 1;
  height: 100%;
  gap: 11px;
  padding-left: 7px;
}
.node-body svg,
.cls svg {
  width: 32px;
  height: 32px;
}
.cls {
  gap: 11px;
  padding-left: 7px;
}
.root .node-body,
.root .cls {
  background: #d9d9d9;
}
.layout .node-body,
.layout .cls {
  background: #f5f5f5;
}
.vbar {
  flex: none;
  align-self: stretch;
  width: 16px;
  background: #efefef;
}
.arrows {
  display: flex;
  flex-direction: column;
  justify-content: space-between;
  padding: 10px 0 9px 7px;
}
.arrows b {
  width: 0;
  border: 5px solid transparent;
}
.arrows .up {
  border-top: 0;
  border-bottom: 8px solid #a0a0a0;
}
.arrows .dn {
  border-bottom: 0;
  border-top: 8px solid #a0a0a0;
}
.hbar {
  height: 24px;
  padding: 10px 0 0 27px;
}
.hbar i {
  display: block;
  height: 5px;
  border-radius: 3px;
  background: #858585;
}
.thumb-a {
  width: 278px;
}
.thumb-b {
  width: 296px;
}

.props {
  padding-top: 8px;
}
.prop-tools {
  display: flex;
  align-items: center;
  height: 72px;
  padding: 4px 0 0 5px;
}
.prop-tools .filter {
  width: 246px;
}
.prop-tools button {
  width: 62px;
  display: flex;
  justify-content: center;
  flex: none;
  position: relative;
}
.prop-tools svg {
  width: 44px;
  height: 44px;
}
.drop::after {
  content: '';
  position: absolute;
  right: 6px;
  bottom: 0;
  border: 5px solid transparent;
  border-top-color: #000;
  border-bottom: 0;
}
.object-line {
  margin: 0 0 2px;
  height: 32px;
  padding: 0 5px;
  border: 1px solid #b4b4b4;
  border-width: 1px 0 2px 1px;
  font-family: 'Liberation Mono', monospace;
  font-size: 20px;
}
.prop-view {
  height: 355px;
}
.prop-view th {
  height: 46px;
}
.c-arrow {
  width: 40px;
}
.c-name {
  width: 258px;
}
.prop-view tbody tr {
  height: 40px;
}
.prop-view td {
  border-bottom: 2px solid #d4d4d4;
}
.arrow svg {
  width: 14px;
  height: 14px;
  margin: 0 auto;
}
.name {
  padding-left: 6px;
}
.bold {
  font-size: 24px;
  font-weight: 700;
}
.value {
  padding-left: 7px;
  border-left: 2px solid #d4d4d4;
}
.group td {
  background: #a0a0a0;
  border-left-color: #a0a0a0;
  color: #fff;
}
.orange td {
  background: #fff0de;
}
.orange .arrow {
  background: #ffe2b8;
}
.pale td {
  background: #ffffdc;
}
.pale .arrow,
.yellow td {
  background: #ffffbf;
}
.value input {
  appearance: none;
  display: block;
  width: 20px;
  height: 20px;
  margin: 0;
  border-radius: 3px;
  background: #005fb8;
}
.value input:checked::after {
  content: '';
  display: block;
  width: 8px;
  height: 4px;
  margin: 7px 0 0 6px;
  border: solid #fff;
  border-width: 0 0 2px 2px;
  transform: rotate(-45deg);
}
.prop-view .vbar {
  padding: 26px 0 0 11px;
}
.prop-view .vbar i {
  display: block;
  height: 36px;
  border-radius: 3px 0 0 3px;
  background: #858585;
}

.resources {
  flex: 1;
  min-height: 0;
  display: flex;
  flex-direction: column;
  padding-top: 8px;
}
.res-tools {
  flex: none;
  display: flex;
  align-items: center;
  height: 69px;
  padding-left: 9px;
}
.res-tools button {
  margin-right: 14px;
}
.res-tools svg {
  width: 44px;
  height: 44px;
}
.res-tools .filter {
  flex: 1;
  width: 0;
  margin-left: 52px;
}
.res-panes {
  flex: 1;
  display: flex;
  gap: 10px;
}
.res-tree,
.res-view {
  border: 1px solid #868686;
  background: #fff;
}
.res-tree {
  width: 216px;
  padding: 2px 0 0 49px;
}
.res-view {
  flex: 1;
  border-right: 0;
  box-shadow: inset 2px 2px #fff, inset 3px 3px #eaeaea;
}
.tabs {
  flex: none;
  display: flex;
  align-items: flex-start;
  height: 39px;
  padding-left: 4px;
  font-size: 24px;
}
.tabs button {
  width: 168px;
  height: 36px;
  background: #f3f3f3;
  border: solid #e2e2e2;
  border-width: 0 2px 1px 1px;
}
.tabs button:nth-child(2) {
  width: 131px;
}
.tabs button.current {
  flex: 1;
  height: 38px;
  padding-left: 14px;
  background: #f9f9f9;
  border-right: 0;
}

/* status */
.status {
  flex: none;
  display: flex;
  justify-content: flex-end;
  height: 36px;
  padding: 8px 132px 0 0;
  overflow: hidden;
}
.ime {
  display: flex;
  align-items: flex-start;
  gap: 9px;
  width: 228px;
  height: 28px;
  padding: 2px 4px 0 5px;
  background: #fff;
  font-size: 24px;
  font-weight: 700;
  line-height: 26px;
}
.ime svg {
  width: 20px;
  height: 24px;
}
.grip {
  flex: none;
  width: 4px;
  height: 26px;
  background: radial-gradient(circle at 2px 2px, #bbb 1px, transparent 2px) 0 0 / 4px 8px;
}
.boxed {
  border: 2px solid #888;
  font-size: 20px;
  line-height: 22px;
  font-weight: 400;
}
</style>
